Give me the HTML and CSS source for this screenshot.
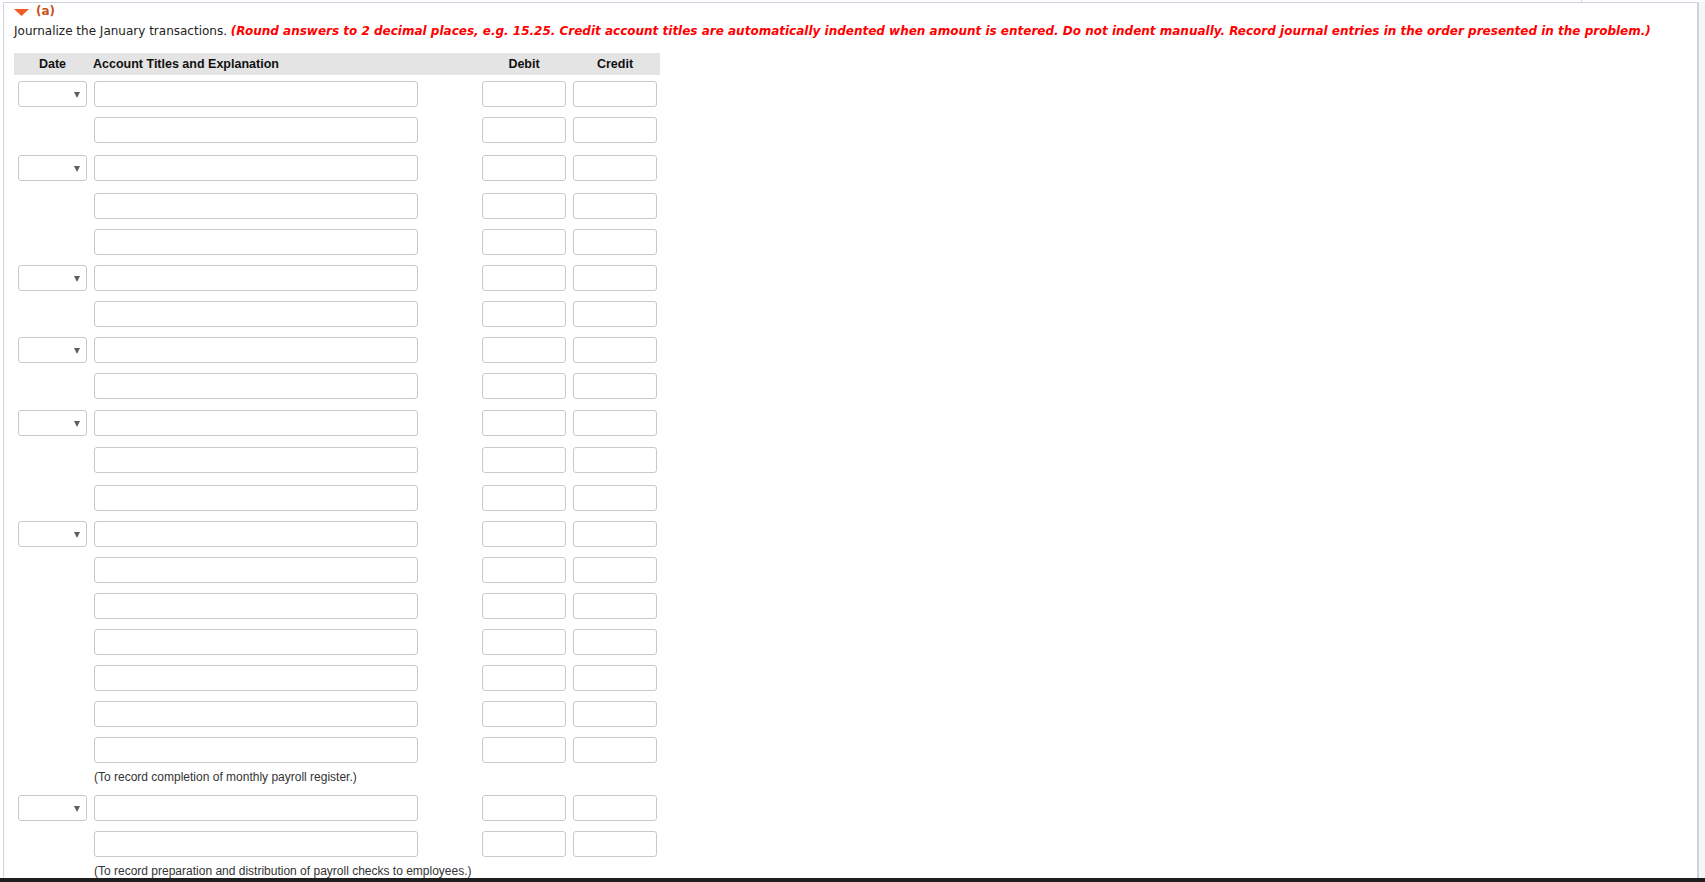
FILE: index.html
```html
<!DOCTYPE html>
<html lang="en">
<head>
<meta charset="utf-8">
<title>Journalize the January transactions</title>
<link rel="stylesheet" href="styles.css">
</head>
<body>
<div class="frame">
  <div class="top-strip"><span class="tick"></span></div>
  <div class="main">
    <div class="lead"></div>
    <div class="panel">
      <div class="part-title">
        <svg class="toggle" width="15" height="7" viewBox="0 0 15 7"><polygon points="0,0 15,0 7.5,7" fill="#f15a22"/></svg>
        <span class="part-label">(a)</span>
      </div>
      <p class="instructions">Journalize the January transactions. <em class="warn">(Round answers to 2 decimal places, e.g. 15.25. Credit account titles are automatically indented when amount is entered. Do not indent manually. Record journal entries in the order presented in the problem.)</em></p>

      <div class="journal">
        <div class="head">
          <span class="h-date">Date</span>
          <span class="h-acct">Account Titles and Explanation</span>
          <span class="h-amt">Debit</span>
          <span class="h-amt">Credit</span>
        </div>
        <div class="rows">
          <!-- Entry 1 -->
          <div class="row"><div class="select"><span class="caret"></span></div><input class="field acct"><input class="field amt"><input class="field amt"></div>
          <div class="row gap12"><span class="blank"></span><input class="field acct"><input class="field amt"><input class="field amt"></div>
          <!-- Entry 2 -->
          <div class="row gap12"><div class="select"><span class="caret"></span></div><input class="field acct"><input class="field amt"><input class="field amt"></div>
          <div class="row"><span class="blank"></span><input class="field acct"><input class="field amt"><input class="field amt"></div>
          <div class="row"><span class="blank"></span><input class="field acct"><input class="field amt"><input class="field amt"></div>
          <!-- Entry 3 -->
          <div class="row"><div class="select"><span class="caret"></span></div><input class="field acct"><input class="field amt"><input class="field amt"></div>
          <div class="row"><span class="blank"></span><input class="field acct"><input class="field amt"><input class="field amt"></div>
          <!-- Entry 4 -->
          <div class="row"><div class="select"><span class="caret"></span></div><input class="field acct"><input class="field amt"><input class="field amt"></div>
          <div class="row gap11"><span class="blank"></span><input class="field acct"><input class="field amt"><input class="field amt"></div>
          <!-- Entry 5 -->
          <div class="row gap11"><div class="select"><span class="caret"></span></div><input class="field acct"><input class="field amt"><input class="field amt"></div>
          <div class="row gap12"><span class="blank"></span><input class="field acct"><input class="field amt"><input class="field amt"></div>
          <div class="row"><span class="blank"></span><input class="field acct"><input class="field amt"><input class="field amt"></div>
          <!-- Entry 6 -->
          <div class="row"><div class="select"><span class="caret"></span></div><input class="field acct"><input class="field amt"><input class="field amt"></div>
          <div class="row"><span class="blank"></span><input class="field acct"><input class="field amt"><input class="field amt"></div>
          <div class="row"><span class="blank"></span><input class="field acct"><input class="field amt"><input class="field amt"></div>
          <div class="row"><span class="blank"></span><input class="field acct"><input class="field amt"><input class="field amt"></div>
          <div class="row"><span class="blank"></span><input class="field acct"><input class="field amt"><input class="field amt"></div>
          <div class="row"><span class="blank"></span><input class="field acct"><input class="field amt"><input class="field amt"></div>
          <div class="row gap0"><span class="blank"></span><input class="field acct"><input class="field amt"><input class="field amt"></div>
          <p class="note">(To record completion of monthly payroll register.)</p>
          <!-- Entry 7 -->
          <div class="row"><div class="select"><span class="caret"></span></div><input class="field acct"><input class="field amt"><input class="field amt"></div>
          <div class="row gap0"><span class="blank"></span><input class="field acct"><input class="field amt"><input class="field amt"></div>
          <p class="note">(To record preparation and distribution of payroll checks to employees.)</p>
        </div>
      </div>
    </div>
    <div class="gutter"></div>
  </div>
  <div class="bottom-bar"></div>
</div>
</body>
</html>
```

FILE: styles.css
```css
html, body {
  margin: 0;
  padding: 0;
  background: #ffffff;
}

.frame {
  width: 1705px;
  height: 882px;
  display: flex;
  flex-direction: column;
  overflow: hidden;
}

.top-strip {
  height: 2px;
  display: flex;
}

.tick {
  margin-left: 1581px;
  width: 1px;
  background: #d3d9e1;
}

.main {
  flex: 1;
  display: flex;
  min-height: 0;
}

.lead {
  width: 3px;
}

.panel {
  flex: 1;
  border-left: 1px solid #cdd5e0;
  border-top: 1px solid #cdd5e0;
  border-right: 2px solid #cfd3d9;
  padding-left: 10px;
  background: #ffffff;
  overflow: hidden;
}

.gutter {
  width: 6px;
  background: #f4f6f9;
}

.bottom-bar {
  height: 4px;
  background: #1e1e1e;
}

.part-title {
  height: 16px;
  display: flex;
  align-items: center;
  gap: 7px;
}

.toggle {
  display: block;
  margin-top: 2px;
}

.part-label {
  font-family: "DejaVu Sans", Verdana, sans-serif;
  font-weight: bold;
  font-size: 12px;
  line-height: 16px;
  color: #c8531b;
}

.instructions {
  margin: 4px 0 0 0;
  font-family: "DejaVu Sans", Verdana, sans-serif;
  font-size: 12px;
  line-height: 16px;
  color: #222222;
  white-space: nowrap;
}

.warn {
  font-weight: bold;
  font-style: italic;
  color: #ff0000;
}

.journal {
  margin-top: 14px;
  width: 646px;
}

.head {
  height: 22px;
  background: #e4e4e4;
  display: grid;
  grid-template-columns: 76px 388px 91px 84px;
  padding-left: 4px;
  font-family: "Liberation Sans", Arial, sans-serif;
  font-weight: bold;
  font-size: 12.5px;
  line-height: 22px;
  color: #111111;
}

.h-date {
  width: 69px;
  text-align: center;
}

.h-acct {
  margin-left: -1px;
}

.h-amt {
  width: 84px;
  text-align: center;
}

.rows {
  padding-top: 6px;
  padding-left: 4px;
}

.row {
  display: grid;
  grid-template-columns: 76px 388px 91px 84px;
  height: 26px;
  margin-bottom: 10px;
}

.row.gap11 {
  margin-bottom: 11px;
}

.row.gap12 {
  margin-bottom: 12px;
}

.row.gap0 {
  margin-bottom: 0;
}

.field {
  display: block;
  box-sizing: border-box;
  height: 26px;
  margin: 0;
  padding: 0 4px;
  border: 1px solid #c9c9c9;
  border-radius: 3px;
  background: #ffffff;
  outline: none;
}

.field.acct {
  width: 324px;
}

.field.amt {
  width: 84px;
}

.select {
  box-sizing: border-box;
  width: 69px;
  height: 26px;
  border: 1px solid #c9c9c9;
  border-radius: 3px;
  background: #ffffff;
  display: flex;
  align-items: center;
  justify-content: flex-end;
  padding-right: 6px;
}

.caret {
  width: 0;
  height: 0;
  border-left: 3px solid transparent;
  border-right: 3px solid transparent;
  border-top: 6px solid #5f5f5f;
  margin-top: 1px;
}

.note {
  margin: 6px 0 10px 0;
  padding-left: 76px;
  height: 16px;
  font-family: "Liberation Sans", Arial, sans-serif;
  font-size: 12px;
  line-height: 16px;
  color: #333333;
  white-space: nowrap;
}
```
